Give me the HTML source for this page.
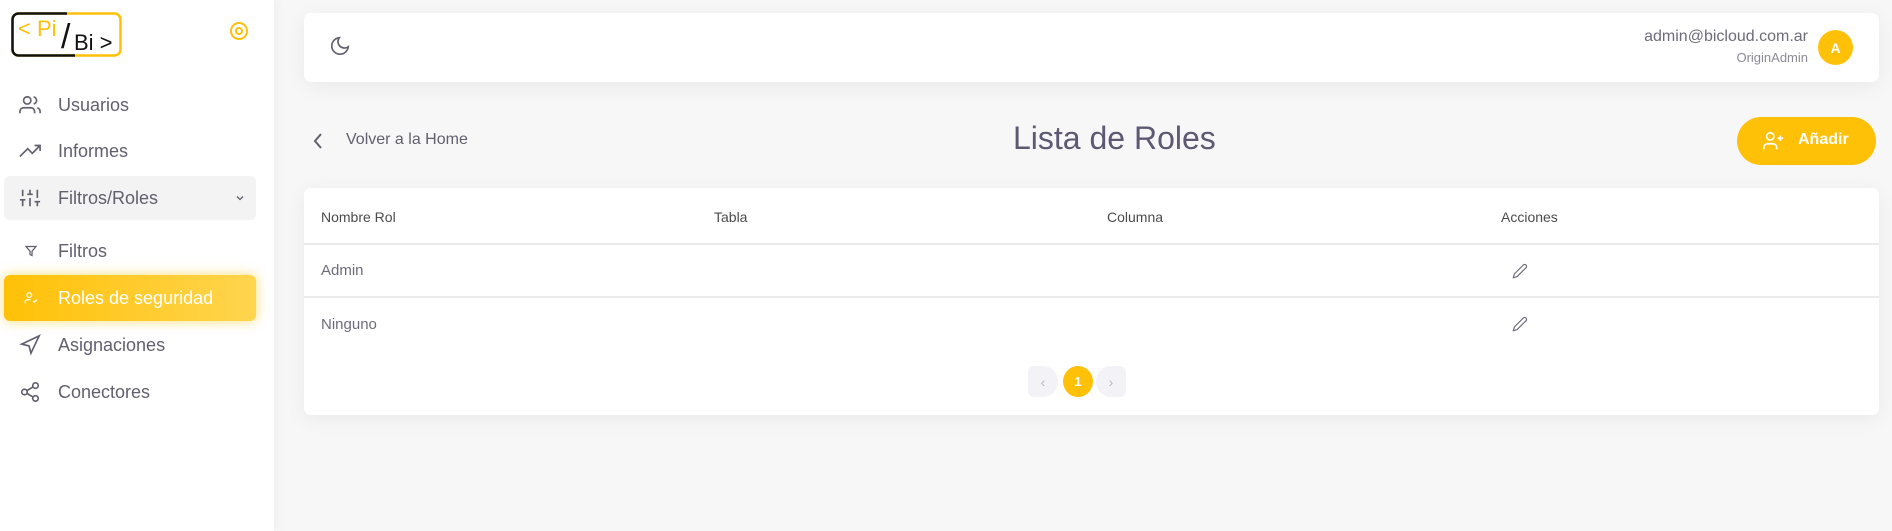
<!DOCTYPE html>
<html><head><meta charset="utf-8"><style>
*{margin:0;padding:0;box-sizing:border-box}
body{width:1892px;height:531px;overflow:hidden;background:#f7f7f8;font-family:"Liberation Sans",sans-serif;color:#6e6b7b;position:relative}
.side{position:absolute;left:0;top:0;width:274px;height:531px;background:#fff;box-shadow:0 0 12px rgba(0,0,0,.05)}
.abs{position:absolute}
.nav{position:absolute;left:0;width:274px;height:40px;display:flex;align-items:center;font-size:18px;color:#625f6e}
.nav svg{position:absolute;left:19px}
.nav span{position:absolute;left:58px}
.card{position:absolute;background:#fff;border-radius:7px;box-shadow:0 4px 20px rgba(0,0,0,.06)}
.th{position:absolute;top:209px;font-size:14px;color:#4b4b4b}
.td{position:absolute;font-size:15px;color:#6e6b7b}
.line{position:absolute;left:304px;width:1575px;height:2px;background:#ebebeb}
.pg{position:absolute;top:366px;width:30px;height:31px;background:#f3f2f7;border-radius:50%;display:flex;align-items:center;justify-content:center;color:#b9b9c3;font-size:14px}
</style></head><body>
<div class="side">
  <svg class="abs" style="left:11px;top:12px" width="111" height="45" viewBox="0 0 111 45">
    <rect x="1.5" y="1.5" width="108" height="42" rx="6" fill="none" stroke="#ffc107" stroke-width="2.5"/>
    <path d="M56 1.5 H7.5 a6 6 0 0 0 -6 6 v30 a6 6 0 0 0 6 6 H64" fill="none" stroke="#111" stroke-width="2.5"/>
    <text x="7" y="24" font-family="Liberation Sans" font-size="22" fill="#ffc107">&lt; Pi</text>
    <text x="50" y="36" font-family="Liberation Sans" font-size="34" fill="#111">/</text>
    <text x="63" y="38" font-family="Liberation Sans" font-size="22" fill="#111">Bi &gt;</text>
  </svg>
  <svg class="abs" style="left:229px;top:21px" width="20" height="20" viewBox="0 0 20 20"><circle cx="10" cy="10" r="8" fill="none" stroke="#ffc107" stroke-width="2"/><circle cx="10" cy="10" r="3" fill="none" stroke="#ffc107" stroke-width="2"/></svg>

  <div class="nav" style="top:85px"><svg width="22" height="22" viewBox="0 0 24 24" fill="none" stroke="#625f6e" stroke-width="1.8"><circle cx="9" cy="7" r="4"/><path d="M1 21v-2a4 4 0 0 1 4-4h8a4 4 0 0 1 4 4v2M16 3.1a4 4 0 0 1 0 7.8M23 21v-2a4 4 0 0 0-3-3.9"/></svg><span>Usuarios</span></div>
  <div class="nav" style="top:131px"><svg width="22" height="22" viewBox="0 0 24 24" fill="none" stroke="#625f6e" stroke-width="1.8"><path d="M1 18l8.5-8.5 5 5L23 6M17 6h6v6"/></svg><span>Informes</span></div>
  <div class="abs" style="left:4px;top:176px;width:252px;height:44px;background:#f3f3f3;border-radius:6px"></div>
  <div class="nav" style="top:178px"><svg width="22" height="22" viewBox="0 0 24 24" fill="none" stroke="#625f6e" stroke-width="1.8"><path d="M4 21v-7M4 10V3M12 21v-9M12 8V3M20 21v-5M20 12V3M1 14h6M9 8h6M17 16h6"/></svg><span>Filtros/Roles</span><svg style="left:234px" width="12" height="12" viewBox="0 0 24 24" fill="none" stroke="#625f6e" stroke-width="2.5"><path d="M6 9l6 6 6-6"/></svg></div>
  <div class="nav" style="top:231px"><svg style="left:25px" width="12" height="12" viewBox="0 0 24 24" fill="none" stroke="#625f6e" stroke-width="2.5"><path d="M22 3H2l8 9.5V19l4 2v-8.5z"/></svg><span>Filtros</span></div>
  <div class="abs" style="left:4px;top:275px;width:252px;height:46px;border-radius:6px;background:linear-gradient(90deg,#ffc107,#ffd54f);box-shadow:0 0 12px rgba(255,193,7,.55)"></div>
  <div class="nav" style="top:278px;color:#fff"><svg style="left:24px" width="14" height="14" viewBox="0 0 24 24" fill="none" stroke="#fff" stroke-width="2.2"><circle cx="9" cy="7" r="4"/><path d="M2 21v-2a4 4 0 0 1 4-4h5M16 17l2 2 4-4"/></svg><span>Roles de seguridad</span></div>
  <div class="nav" style="top:325px"><svg width="22" height="22" viewBox="0 0 24 24" fill="none" stroke="#625f6e" stroke-width="1.8"><path d="M3 11l19-9-9 19-2-8z"/></svg><span>Asignaciones</span></div>
  <div class="nav" style="top:372px"><svg width="22" height="22" viewBox="0 0 24 24" fill="none" stroke="#625f6e" stroke-width="1.8"><circle cx="18" cy="5" r="3"/><circle cx="6" cy="12" r="3"/><circle cx="18" cy="19" r="3"/><path d="M8.6 13.5l6.8 4M15.4 6.5l-6.8 4"/></svg><span>Conectores</span></div>
</div>

<div class="card" style="left:304px;top:13px;width:1575px;height:69px"></div>
<svg class="abs" style="left:329px;top:35px" width="22" height="22" viewBox="0 0 24 24" fill="none" stroke="#625f6e" stroke-width="1.8"><path d="M21 12.8A9 9 0 1 1 11.2 3 7 7 0 0 0 21 12.8z"/></svg>
<div class="abs" style="right:84px;top:28px;font-size:16px;color:#6e6b7b;text-align:right">admin@bicloud.com.ar</div>
<div class="abs" style="right:84px;top:50px;font-size:13px;color:#8c8a95;text-align:right">OriginAdmin</div>
<div class="abs" style="left:1818px;top:30px;width:35px;height:35px;border-radius:50%;background:#ffc107;color:#fff;font-weight:bold;font-size:14px;display:flex;align-items:center;justify-content:center">A</div>

<svg class="abs" style="left:311px;top:131px" width="14" height="20" viewBox="0 0 14 20" fill="none" stroke="#625f6e" stroke-width="2"><path d="M10 3L4 10l6 7"/></svg>
<div class="abs" style="left:346px;top:131px;font-size:16px;color:#625f6e">Volver a la Home</div>
<div class="abs" style="left:1013px;top:120px;font-size:32px;color:#5e5873">Lista de Roles</div>
<div class="abs" style="left:1737px;top:117px;width:139px;height:48px;border-radius:24px;background:#ffc107;color:#fff;font-weight:bold;font-size:16px"><svg class="abs" style="left:24px;top:13px" width="24" height="22" viewBox="0 0 24 24" fill="none" stroke="#fff" stroke-width="1.8"><circle cx="9" cy="7" r="4"/><path d="M2 21v-2a4 4 0 0 1 4-4h6a4 4 0 0 1 4 4v2M20 6v6M17 9h6"/></svg><span class="abs" style="left:61px;top:14px">Añadir</span></div>

<div class="card" style="left:304px;top:188px;width:1575px;height:227px"></div>
<div class="th" style="left:321px">Nombre Rol</div>
<div class="th" style="left:714px">Tabla</div>
<div class="th" style="left:1107px">Columna</div>
<div class="th" style="left:1501px">Acciones</div>
<div class="line" style="top:243px"></div>
<div class="line" style="top:296px"></div>
<div class="td" style="left:321px;top:262px">Admin</div>
<div class="td" style="left:321px;top:316px">Ninguno</div>
<svg class="abs" style="left:1512px;top:263px" width="16" height="16" viewBox="0 0 24 24" fill="none" stroke="#6e6b7b" stroke-width="1.8"><path d="M17 3a2.8 2.8 0 0 1 4 4L7.5 20.5 2 22l1.5-5.5z"/></svg>
<svg class="abs" style="left:1512px;top:316px" width="16" height="16" viewBox="0 0 24 24" fill="none" stroke="#6e6b7b" stroke-width="1.8"><path d="M17 3a2.8 2.8 0 0 1 4 4L7.5 20.5 2 22l1.5-5.5z"/></svg>
<div class="pg" style="left:1028px;border-radius:6px 50% 50% 6px">‹</div>
<div class="pg" style="left:1063px;background:#ffc107;color:#fff;font-weight:bold;font-size:13px">1</div>
<div class="pg" style="left:1096px;border-radius:50% 6px 6px 50%">›</div>
</body></html>
